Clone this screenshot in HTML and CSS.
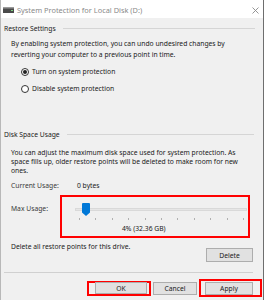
FILE: index.html
```html
<!DOCTYPE html>
<html>
<head>
<meta charset="utf-8">
<link rel="stylesheet" href="styles.css">
</head>
<body>
<div class="window">
  <div class="titlebar">
    <svg class="drive-icon" width="11" height="6" viewBox="0 0 11 6">
      <rect x="0" y="0" width="11" height="6" fill="#4a4a4a"/>
      <rect x="0" y="0" width="11" height="1.5" fill="#9a9a9a"/>
      <rect x="8" y="3" width="2" height="1" fill="#7fd07f"/>
    </svg>
    <span class="title">System Protection for Local Disk (D:)</span>
    <svg class="close" width="7" height="7" viewBox="0 0 7 7">
      <path d="M0.5 0.5 L6.5 6.5 M6.5 0.5 L0.5 6.5" stroke="#8a8a8a" stroke-width="0.9" fill="none"/>
    </svg>
  </div>
  <div class="content">
    <div class="group-header"><span>Restore Settings</span><span class="rule"></span></div>
    <p class="para p1">By enabling system protection, you can undo undesired changes by<br>reverting your computer to a previous point in time.</p>
    <div class="radio r1"><span class="circle checked"></span><span>Turn on system protection</span></div>
    <div class="radio r2"><span class="circle"></span><span>Disable system protection</span></div>
    <div class="group-header gh2"><span>Disk Space Usage</span><span class="rule rule2"></span></div>
    <p class="para p2">You can adjust the maximum disk space used for system protection. As<br>space fills up, older restore points will be deleted to make room for new<br>ones.</p>
    <div class="kv"><span class="key key1">Current Usage:</span><span>0 bytes</span></div>
    <div class="max-row">
      <span class="key key2">Max Usage:</span>
      <div class="slider-box">
        <div class="track">
          <svg class="thumb" width="8" height="13" viewBox="0 0 8 13">
            <path d="M1 0 H7 Q8 0 8 1 V9.5 L4 13 L0 9.5 V1 Q0 0 1 0 Z" fill="#0078d7"/>
          </svg>
        </div>
        <div class="ticks">
          <span></span><span></span><span></span><span></span><span></span><span></span><span></span><span></span><span></span><span></span><span></span>
        </div>
        <div class="slider-label">4% (32.36 GB)</div>
      </div>
    </div>
    <div class="delete-row">
      <span>Delete all restore points for this drive.</span>
      <button class="btn btn-delete">Delete</button>
    </div>
  </div>
  <div class="separator"></div>
  <div class="footer">
    <div class="highlight hl-ok"><button class="btn btn-ok">OK</button></div>
    <button class="btn btn-cancel">Cancel</button>
    <div class="highlight hl-apply"><button class="btn btn-apply">Apply</button></div>
  </div>
</div>
</body>
</html>
```

FILE: styles.css
```css
* { box-sizing: border-box; }
html, body { margin: 0; padding: 0; background: #f0f0f0; }
body {
  font-family: "Noto Sans", "DejaVu Sans", sans-serif;
  font-size: 6.75px;
  color: #1a1a1a;
}
.window {
  width: 264px;
  height: 300px;
  background: #f0f0f0;
  border-left: 1px solid #b8b8b8;
  border-right: 1px solid #6e6e6e;
  overflow: hidden;
}
.titlebar {
  height: 18px;
  background: #ffffff;
  display: flex;
  align-items: center;
  padding-left: 2px;
  padding-right: 4px;
}
.drive-icon { display: block; margin-top: 2px; }
.title {
  margin-left: 3px;
  color: #8a8a8a;
  font-size: 7.4px;
  line-height: 10px;
  flex: 1;
  padding-top: 1px;
}
.close { display: block; margin-right: 0px; margin-top: 2px; }

.content {
  padding: 0 8px 0 3px;
}
.group-header {
  display: flex;
  align-items: center;
  line-height: 11px;
  margin-top: 5px;
  color: #1a1a1a;
}
.rule {
  flex: 1;
  height: 1px;
  background: #d5d5d5;
  margin-left: 7px;
}
.rule2 { margin-right: 1px; margin-left: 7px; }
.gh2 { margin-top: 35px; }
.para {
  margin: 0 0 0 7px;
}
.p1 { margin-top: 4px; line-height: 11px; }
.p2 { margin-top: 8px; line-height: 9px; }
.radio {
  display: flex;
  align-items: center;
  height: 11px;
  margin-left: 17px;
  margin-top: 6px;
}
.circle {
  width: 8px;
  height: 8px;
  border: 1px solid #333;
  border-radius: 50%;
  background: #fff;
  margin-right: 3px;
  display: flex;
  align-items: center;
  justify-content: center;
}
.circle.checked::after {
  content: "";
  width: 4px;
  height: 4px;
  border-radius: 50%;
  background: #222;
}
.kv {
  display: flex;
  line-height: 11px;
  margin-top: 5px;
  margin-left: 7px;
}
.key { color: #3a3a3a; }
.key1 { width: 66px; }
.max-row {
  display: flex;
  align-items: flex-start;
  margin-top: 4px;
  margin-left: 7px;
}
.key2 { width: 49px; margin-top: 8px; line-height: 11px; }
.slider-box {
  width: 190px;
  height: 43px;
  border: 2px solid #ff0000;
  padding-top: 11px;
}
.track {
  position: relative;
  margin-left: 13px;
  width: 172px;
  height: 3px;
  background: #e6e6e6;
  border: 1px solid #d9d9d9;
}
.thumb {
  position: absolute;
  left: 6px;
  top: -6px;
  display: block;
}
.ticks {
  display: flex;
  justify-content: space-between;
  margin-left: 17px;
  width: 165px;
  margin-top: 7px;
  height: 2px;
}
.ticks span {
  width: 1px;
  height: 2px;
  background: #b0b0b0;
}
.slider-label {
  margin-top: 4px;
  margin-left: 60px;
  line-height: 10px;
}
.delete-row {
  display: flex;
  justify-content: space-between;
  align-items: flex-start;
  margin-top: 3px;
  margin-left: 7px;
  margin-right: 2px;
  line-height: 11px;
}
.btn {
  font-family: inherit;
  font-size: 6.75px;
  color: #1a1a1a;
  background: #e1e1e1;
  border: 1px solid #adadad;
  padding: 0;
  margin: 0;
  line-height: 11px;
}
.btn-delete {
  width: 47px;
  height: 14px;
  margin-top: 7px;
}
.separator {
  margin: 10px 10px 0 3px;
  height: 1px;
  background: #d0d0d0;
}
.footer {
  display: flex;
  align-items: center;
  padding-left: 86px;
  padding-top: 6px;
}
.highlight {
  border: 2px solid #ff0000;
  display: flex;
  align-items: center;
}
.hl-ok {
  width: 64px;
  height: 15px;
  padding-left: 6px;
}
.btn-ok { width: 52px; height: 12px; }
.btn-cancel { width: 44px; height: 13px; margin-left: 2px; margin-right: 2px; }
.hl-apply {
  width: 63px;
  height: 18px;
  padding-left: 4px;
}
.btn-apply { width: 48px; height: 13px; }
```
